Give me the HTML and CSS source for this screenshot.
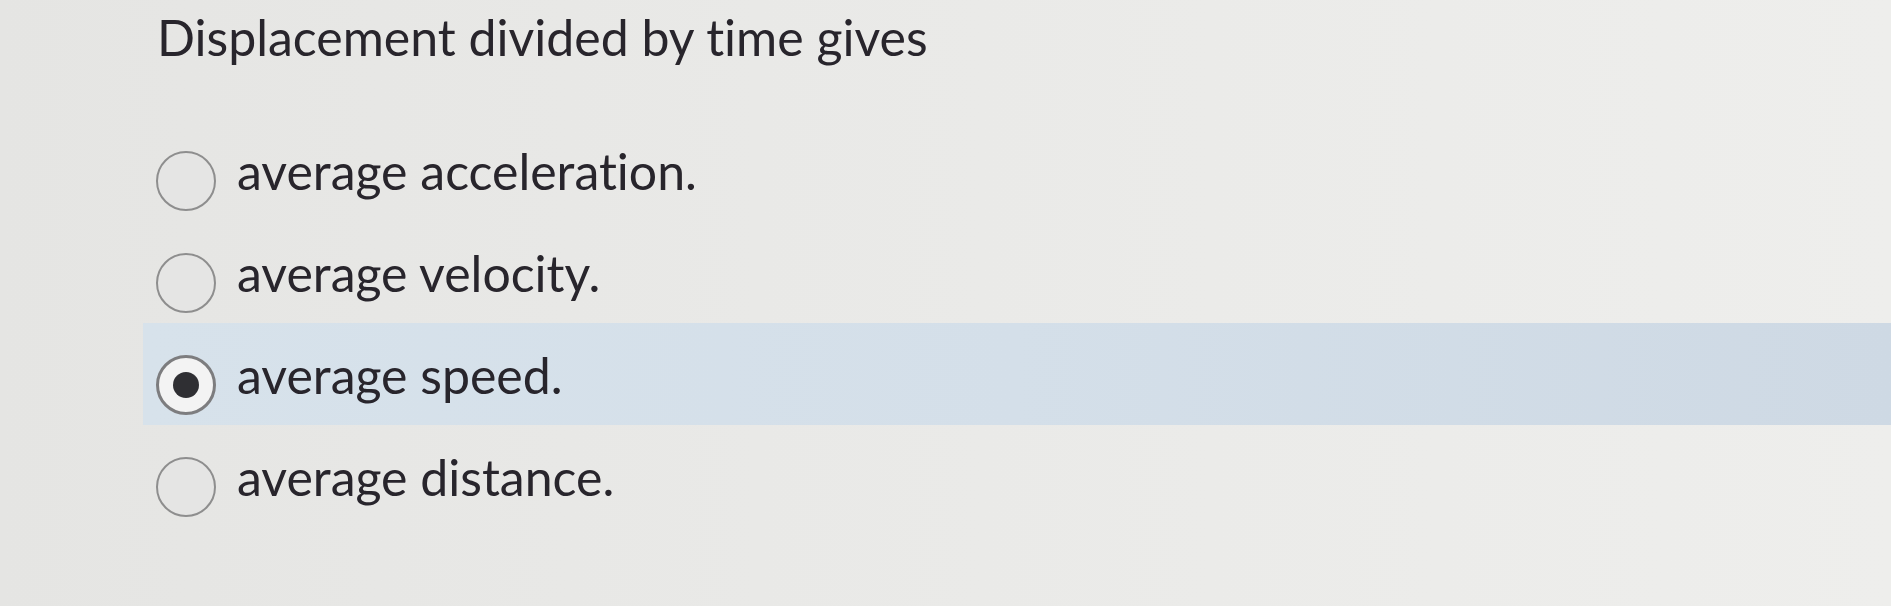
FILE: index.html
```html
<!DOCTYPE html>
<html lang="en">
<head>
<meta charset="utf-8">
<title>Question</title>
<link rel="stylesheet" href="styles.css">
</head>
<body>
<div class="page">
  <div class="question">Displacement divided by time gives</div>
  <div class="options">
    <label class="option">
      <span class="radio"></span>
      <span class="label">average acceleration.</span>
    </label>
    <label class="option">
      <span class="radio"></span>
      <span class="label">average velocity.</span>
    </label>
    <label class="option selected">
      <span class="radio checked"><span class="dot"></span></span>
      <span class="label">average speed.</span>
    </label>
    <label class="option">
      <span class="radio"></span>
      <span class="label">average distance.</span>
    </label>
  </div>
</div>
</body>
</html>
```

FILE: styles.css
```css
html, body {
  margin: 0;
  padding: 0;
}
body {
  width: 1891px;
  height: 606px;
  overflow: hidden;
  background: linear-gradient(90deg, #e5e5e3 0%, #e9e9e7 40%, #eeeeec 100%);
  font-family: Lato, "Open Sans", "Liberation Sans", sans-serif;
  font-variant-ligatures: none;
  color: #28252c;
}
.page {
  padding-top: 7px;
}
.question {
  padding-left: 157px;
  font-size: 50px;
  line-height: 60px;
  height: 60px;
  margin-bottom: 52px;
}
.options {
  display: flex;
  flex-direction: column;
}
.option {
  display: flex;
  align-items: center;
  box-sizing: border-box;
  height: 102px;
  padding-top: 22px;
  padding-bottom: 0;
  padding-left: 156px;
}
.option.selected {
  margin-left: 143px;
  padding-left: 13px;
  background: linear-gradient(90deg, #d7e2eb 0%, #d4dfe9 50%, #ced9e4 100%);
}
.radio {
  box-sizing: border-box;
  width: 60px;
  height: 60px;
  border-radius: 50%;
  border: 2px solid #8e8e8e;
  background: #e5e5e4;
  display: flex;
  align-items: center;
  justify-content: center;
  flex: none;
}
.radio.checked {
  border: 3px solid #7d7d7f;
  background: #f3f3f3;
}
.dot {
  width: 26px;
  height: 26px;
  border-radius: 50%;
  background: #2f2f33;
}
.label {
  margin-left: 21px;
  font-size: 50px;
  line-height: 60px;
  position: relative;
  top: -10px;
}
```
